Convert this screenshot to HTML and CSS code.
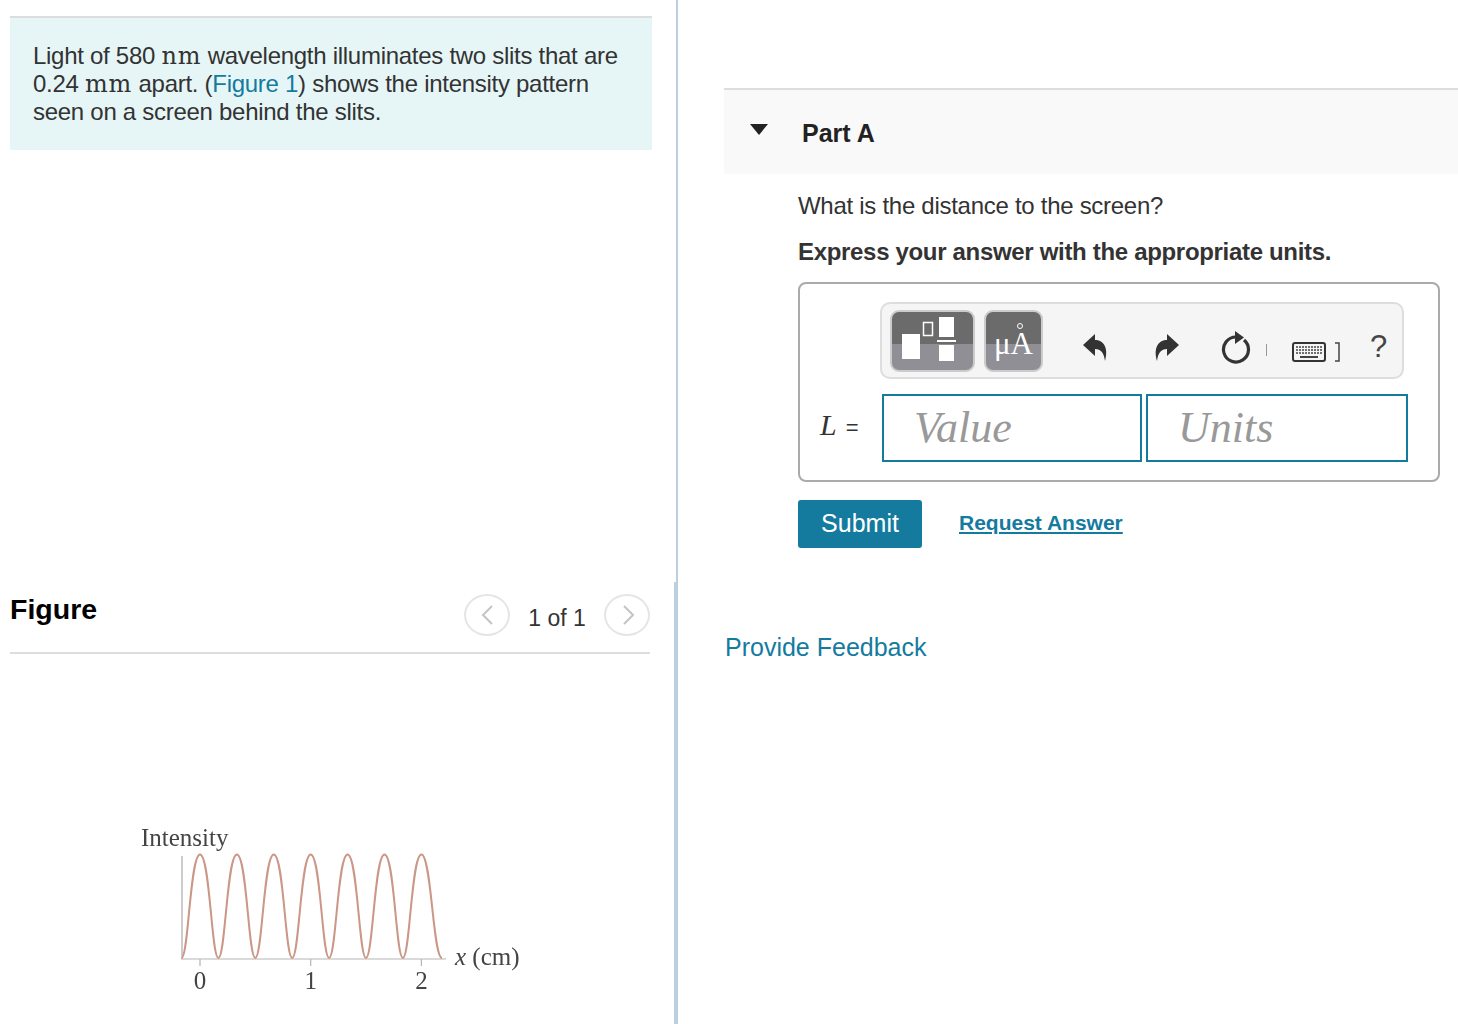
FILE: index.html
```html
<!DOCTYPE html>
<html lang="en">
<head>
  <meta charset="UTF-8">
  <title>Part A</title>
  <link rel="stylesheet" href="styles.css">
</head>
<body>

  <div class="left">
    <div class="intro">
      Light of 580 <span class="math">nm</span> wavelength illuminates two slits that are<br>
      0.24 <span class="math">mm</span> apart. (<a href="#">Figure 1</a>) shows the intensity pattern<br>
      seen on a screen behind the slits.
    </div>

    <div class="figure-head">
      <h2>Figure</h2>
      <div class="pager">
        <span class="pager-btn">
          <svg width="14" height="22" viewBox="0 0 14 22"><path d="M12 2 3 11l9 9" fill="none" stroke="#c4c4c4" stroke-width="2"/></svg>
        </span>
        <span class="pager-text">1 of 1</span>
        <span class="pager-btn">
          <svg width="14" height="22" viewBox="0 0 14 22"><path d="m4 2 9 9-9 9" fill="none" stroke="#c4c4c4" stroke-width="2"/></svg>
        </span>
      </div>
    </div>

    <svg class="chart" width="400" height="180" viewBox="130 820 400 180">
      <path d="M182 856V959" stroke="#aaa" stroke-width="1.2" fill="none"/>
      <path d="M181 959H446M200 959v7M310.7 959v7M421.4 959v7" stroke="#b5b5b5" stroke-width="1.2" fill="none"/>
      <path class="curve" d="M181.500 958C188.500 958 190 854.500 200 854.500S211.400 958 218.400 958 226.900 854.500 236.900 854.500 248.300 958 255.300 958 263.800 854.500 273.800 854.500 285.200 958 292.200 958 300.700 854.500 310.700 854.500 322.100 958 329.100 958 337.600 854.500 347.600 854.500 359 958 366 958 374.500 854.500 384.500 854.500 395.900 958 402.900 958 411.400 854.500 421.400 854.500 433 958 442 958"/>
      <text x="141" y="846" class="chart-text">Intensity</text>
      <text x="455" y="965" class="chart-text"><tspan font-style="italic">x</tspan> (cm)</text>
      <text x="200" y="989" class="chart-text" text-anchor="middle">0</text>
      <text x="310.700" y="989" class="chart-text" text-anchor="middle">1</text>
      <text x="421.400" y="989" class="chart-text" text-anchor="middle">2</text>
    </svg>
  </div>

  <div class="divider">
    <div class="divider-top"></div>
    <div class="divider-bottom"></div>
  </div>

  <div class="right">
    <div class="part-head">
      <span class="caret"></span>
      <h3>Part A</h3>
    </div>

    <div class="part-body">
      <p class="question">What is the distance to the screen?</p>
      <p class="instruction">Express your answer with the appropriate units.</p>

      <div class="answer-box">
        <div class="toolbar">
          <span class="tool-btn tool-template">
            <svg width="80" height="57" viewBox="0 0 80 57">
              <path d="M9 22h18v25H9zM46 5h15v20H46zM44 28h19v2H44zM46 33h15v16H46z" fill="#fff"/>
              <path d="M30.500 10.500h9v13h-9z" fill="none" stroke="#fff" stroke-width="1.500"/>
            </svg>
          </span>
          <span class="tool-btn tool-units">μA<i class="ring"></i></span>

          <svg class="icon icon-undo" width="26" height="30" viewBox="0 0 26 30"><path d="M0 13 12 2v6c8 0 14 7 10 21-1-8-4-12-10-12v7z" fill="#333"/></svg>
          <svg class="icon icon-redo" width="26" height="30" viewBox="0 0 26 30"><path d="M26 13 14 2v6C6 8 0 15 4 29c1-8 4-12 10-12v7z" fill="#333"/></svg>
          <svg class="icon icon-reset" width="32" height="34" viewBox="0 0 32 34">
            <path d="M16 7A12.500 12.500 0 1 0 24 9.900" fill="none" stroke="#333" stroke-width="3.200"/>
            <path d="M15 1l9 6.500-9 6.500z" fill="#333"/>
          </svg>
          <span class="tick"></span>
          <svg class="icon icon-keys" width="34" height="20" viewBox="0 0 34 20">
            <rect x="1" y="1" width="32" height="18" rx="2" fill="#f5f5f5" stroke="#333" stroke-width="2"/>
            <path d="M4 5h26M4 8h26M4 11h26" stroke="#444" stroke-width="1.500" stroke-dasharray="2 1"/>
            <path d="M8 15h18" stroke="#444" stroke-width="2"/>
          </svg>
          <svg class="icon icon-bracket" width="6" height="20" viewBox="0 0 6 20"><path d="M1 1h4v18H1" fill="none" stroke="#444" stroke-width="1.500"/></svg>
          <span class="tool-help">?</span>
        </div>

        <div class="answer-row">
          <span class="answer-label"><i>L</i> =</span>
          <div class="field field-value">Value</div>
          <div class="field field-units">Units</div>
        </div>
      </div>

      <div class="actions">
        <a class="submit" href="#">Submit</a>
        <a class="request" href="#">Request Answer</a>
      </div>
    </div>

    <a class="feedback" href="#">Provide Feedback</a>
  </div>

</body>
</html>
```

FILE: styles.css
```css
html, body {
  margin: 0;
  height: 1024px;
  overflow: hidden;
}

body {
  display: flex;
  font-family: "Liberation Sans", Arial, sans-serif;
  color: #333;
  background: #fff;
}

a {
  color: #147b9f;
  text-decoration: none;
}

/* left column */
.left {
  flex: none;
  width: 642px;
  padding: 16px 22px 0 10px;
}

.intro {
  background: #e6f6f7;
  border-top: 2px solid #ddd;
  padding: 24px 22px 24px 23px;
  font-size: 24px;
  line-height: 28px;
  letter-spacing: -0.28px;
}

.math {
  font-family: "DejaVu Serif", serif;
  font-size: 24px;
  line-height: 1;
  letter-spacing: 0.8px;
}

.figure-head {
  width: 640px;
  height: 62px;
  margin-top: 440px;
  display: flex;
  justify-content: space-between;
  align-items: center;
  border-bottom: 2px solid #ddd;
}

.figure-head h2 {
  margin: 0 0 24px;
  font-size: 28.5px;
  color: #000;
}

.pager {
  display: flex;
  align-items: center;
  margin-bottom: 13px;
}

.pager-btn {
  width: 42px;
  height: 38px;
  border: 2px solid #e5e5e5;
  border-radius: 50%;
  display: flex;
  align-items: center;
  justify-content: center;
}

.pager-text {
  width: 94px;
  text-align: center;
  font-size: 23px;
  position: relative;
  top: 4px;
}

.chart {
  display: block;
  margin: 166px 0 0 120px;
  filter: blur(0.4px);
}

.curve {
  fill: none;
  stroke: #cb9786;
  stroke-width: 2;
}

.chart-text {
  font-family: "Liberation Serif", serif;
  font-size: 25px;
  fill: #444;
}

/* divider */
.divider {
  flex: none;
  width: 4px;
  display: flex;
  flex-direction: column;
  align-items: flex-end;
}

.divider-top {
  width: 2px;
  height: 582px;
  background: #bccfe0;
}

.divider-bottom {
  width: 4px;
  flex: 1;
  background: #bccfe0;
}

/* right column */
.right {
  flex: 1;
  min-width: 0;
  padding: 88px 0 0 46px;
}

.part-head {
  height: 84px;
  background: #f9f9f9;
  border-top: 2px solid #ddd;
  display: flex;
  align-items: center;
}

.caret {
  width: 0;
  height: 0;
  margin: 0 34px 0 26px;
  position: relative;
  top: -3px;
  border-left: 9.5px solid transparent;
  border-right: 9.5px solid transparent;
  border-top: 11px solid #222;
}

.part-head h3 {
  margin: 2px 0 0;
  font-size: 25px;
  color: #222;
}

.part-body {
  padding: 0 18px 0 74px;
}

.question {
  margin: 18px 0 0;
  font-size: 24px;
  line-height: 28px;
  letter-spacing: -0.28px;
}

.instruction {
  margin: 18px 0 0;
  font-size: 24px;
  line-height: 28px;
  letter-spacing: -0.32px;
  font-weight: bold;
}

.answer-box {
  margin-top: 16px;
  height: 196px;
  border: 2px solid #aaa;
  border-radius: 8px;
  padding: 0 30px 0 20px;
}

.toolbar {
  position: relative;
  margin: 18px 0 0 60px;
  width: 520px;
  height: 73px;
  background: #f5f5f5;
  border: 2px solid #ddd;
  border-radius: 10px;
  display: flex;
  align-items: center;
}

.tool-btn {
  box-sizing: border-box;
  height: 62px;
  border: 2px solid #ccc;
  border-radius: 9px;
  background: linear-gradient(#6b6b6b 55%, #918f96 55%);
  display: flex;
  align-items: center;
  justify-content: center;
  position: relative;
}

.tool-template {
  width: 85px;
  margin-left: 8px;
}

.tool-units {
  width: 59px;
  margin-left: 9px;
  font-family: "Liberation Serif", serif;
  font-size: 31px;
  color: #fff;
  padding-top: 6px;
}

.ring {
  position: absolute;
  top: 11px;
  left: 31px;
  width: 4px;
  height: 4px;
  border: 1px solid #fff;
  border-radius: 50%;
}

.icon {
  flex: none;
  display: block;
}

.icon-undo {
  margin: 12px 0 0 40px;
}

.icon-redo {
  margin: 12px 0 0 44px;
}

.icon-reset {
  margin: 13px 0 0 41px;
}

.tick {
  width: 1px;
  height: 12px;
  margin: 18px 0 0 14px;
  background: #999;
}

.icon-keys {
  margin: 22px 0 0 25px;
}

.icon-bracket {
  margin: 22px 0 0 8px;
}

.tool-help {
  margin: 0 0 0 30px;
  font-size: 31px;
  color: #444;
  position: relative;
  top: 6px;
}

.answer-row {
  display: flex;
  align-items: center;
  margin-top: 15px;
}

.answer-label {
  width: 62px;
  font-size: 22px;
  position: relative;
  top: -3px;
}

.answer-label i {
  font-family: "Liberation Serif", serif;
  font-size: 30px;
  margin-right: 3px;
}

.field {
  box-sizing: border-box;
  height: 68px;
  border: 2px solid #147b9f;
  padding-left: 30px;
  font-family: "Liberation Serif", serif;
  font-style: italic;
  font-size: 44px;
  line-height: 64px;
  color: #999;
}

.field-value {
  width: 260px;
}

.field-units {
  width: 262px;
  margin-left: 4px;
}

.actions {
  margin-top: 18px;
  display: flex;
  align-items: center;
}

.submit {
  width: 124px;
  height: 48px;
  background: #147b9f;
  border-radius: 3px;
  color: #fff;
  font-size: 25px;
  line-height: 46px;
  text-align: center;
}

.request {
  margin: 0 0 2px 37px;
  font-size: 21px;
  font-weight: bold;
  text-decoration: underline;
}

.feedback {
  display: block;
  margin: 84px 0 0 1px;
  font-size: 25px;
  line-height: 30px;
}
```
